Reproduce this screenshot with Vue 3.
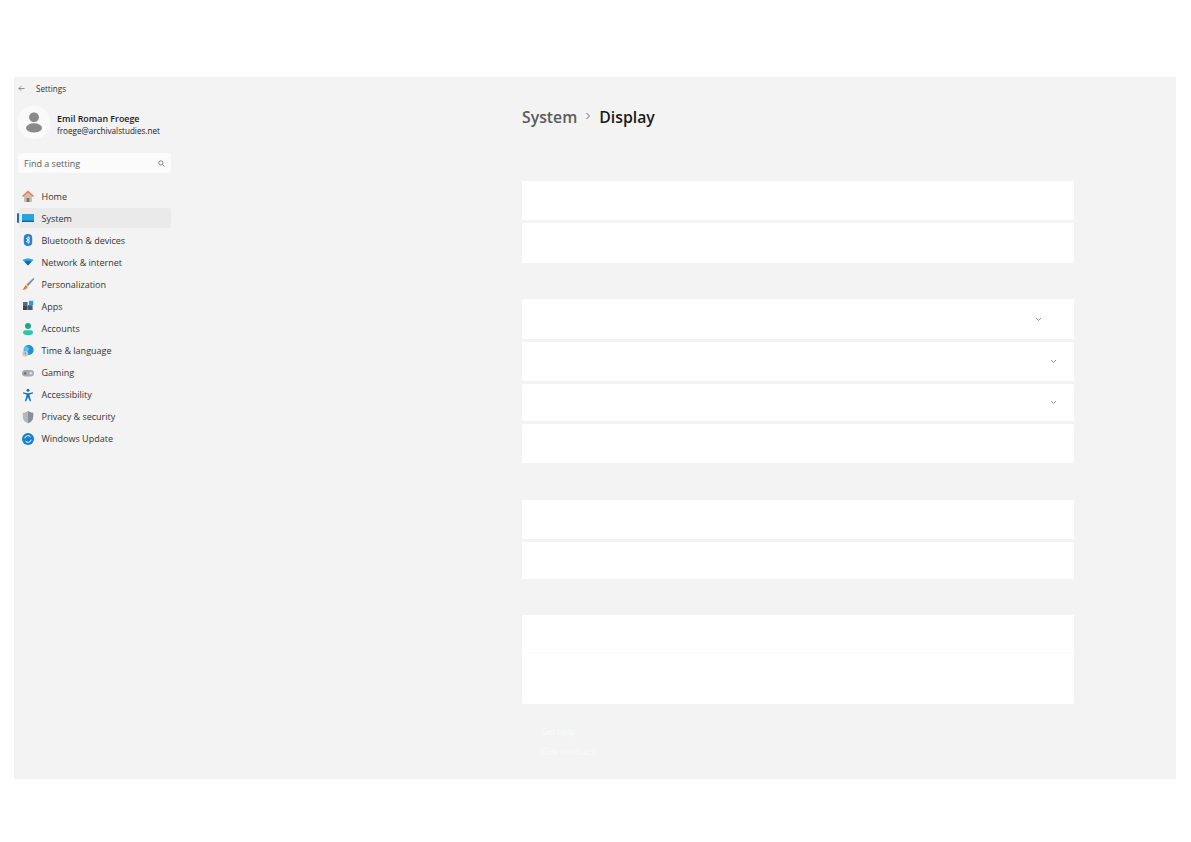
<script setup>
const nav = [
  { key: 'home', label: 'Home' },
  { key: 'system', label: 'System', active: true },
  { key: 'bluetooth', label: 'Bluetooth & devices' },
  { key: 'network', label: 'Network & internet' },
  { key: 'personal', label: 'Personalization' },
  { key: 'apps', label: 'Apps' },
  { key: 'accounts', label: 'Accounts' },
  { key: 'time', label: 'Time & language' },
  { key: 'gaming', label: 'Gaming' },
  { key: 'access', label: 'Accessibility' },
  { key: 'privacy', label: 'Privacy & security' },
  { key: 'update', label: 'Windows Update' }
]
const groups = [
  [{ h: 39 }, { h: 40 }],
  [{ h: 40, chev: 'a' }, { h: 39, chev: 'b' }, { h: 37, chev: 'b' }, { h: 39 }],
  [{ h: 39 }, { h: 37 }]
]
</script>

<template>
  <div class="page">
    <div class="window">
      <aside class="side">
        <div class="titlebar">
          <svg class="back" width="7" height="7" viewBox="0 0 8 8"><path d="M7.500 4H1M3.600 1.400 1 4l2.600 2.600" fill="none" stroke="#777" stroke-width=".9"/></svg>
          <span>Settings</span>
        </div>
        <div class="profile">
          <div class="avatar">
            <svg width="17" height="21" viewBox="0 0 18 22">
              <circle cx="9" cy="5.500" r="5.200" fill="#8a8a8a"/>
              <ellipse cx="9" cy="16.800" rx="8.500" ry="4.900" fill="#8a8a8a"/>
            </svg>
          </div>
          <div class="who">
            <div class="name">Emil Roman Froege</div>
            <div class="mail">froege@archivalstudies.net</div>
          </div>
        </div>
        <div class="search">
          <span>Find a setting</span>
          <svg width="7" height="7" viewBox="0 0 8 8"><circle cx="3.300" cy="3.300" r="2.400" fill="none" stroke="#777" stroke-width="1"/><path d="M5.100 5.100 7.400 7.400" stroke="#777" stroke-width="1"/></svg>
        </div>
        <nav class="nav">
          <div v-for="n in nav" :key="n.key" class="item" :class="{ active: n.active }">
            <svg class="ico" width="14" height="14" viewBox="0 0 14 14">
              <template v-if="n.key === 'home'">
                <path d="M3 6.500 7 3l4 3.500V13H3z" fill="#c4c0ba"/>
                <path d="M5.600 9h2.800v4H5.600z" fill="#9a6a52"/>
                <path d="M1 7 7 1.600 13 7l-1 1-5-4.400L2 8z" fill="#ee7a4c"/>
              </template>
              <template v-else-if="n.key === 'system'">
                <rect x="1" y="3" width="12" height="8" rx=".8" fill="#27a3dc"/>
                <rect x="1" y="9.600" width="12" height="1.400" fill="#12659e"/>
              </template>
              <template v-else-if="n.key === 'bluetooth'">
                <rect x="2.800" y="1" width="8.400" height="12" rx="4" fill="#2a7fd4"/>
                <path d="M5 5l4 3.600-2 1.800V3.600l2 1.800-4 3.600" fill="none" stroke="#fff" stroke-width=".9"/>
              </template>
              <template v-else-if="n.key === 'network'">
                <path d="M1.500 5C4.500 3 9.500 3 12.500 5L7 10.500z" fill="#28a8e8"/>
                <path d="M3.600 6.600C5.600 5.500 8.400 5.500 10.400 6.600L7 10.500z" fill="#0f62b8"/>
              </template>
              <template v-else-if="n.key === 'personal'">
                <path d="M12.400 1 5.400 7.400l1.700 1.700 6.300-7.100z" fill="#8a8a8a"/>
                <path d="M4.900 7.900 6.700 9.700C5.700 12.200 3.400 13 1.400 12.800 3 11.600 3 9.200 4.900 7.900z" fill="#ec7a22"/>
              </template>
              <template v-else-if="n.key === 'apps'">
                <rect x="2" y="6.200" width="4.600" height="4.800" fill="#38465c"/>
                <rect x="7" y="6.200" width="4.600" height="4.800" fill="#4a5a72"/>
                <rect x="2" y="3" width="4.600" height="3" fill="#57677f"/>
                <rect x="8" y="1.800" width="4.200" height="4.200" fill="#2a9ce0"/>
              </template>
              <template v-else-if="n.key === 'accounts'">
                <circle cx="7" cy="4" r="3" fill="#1fa58f"/>
                <path d="M2 10.400C2 8.800 3.400 8.200 4.500 8.200h5c1.100 0 2.500.6 2.500 2.200 0 1.800-2.200 2.800-5 2.800s-5-1-5-2.800z" fill="#2cc4ab"/>
              </template>
              <template v-else-if="n.key === 'time'">
                <circle cx="7.600" cy="6" r="5" fill="#1d93d2"/>
                <path d="M5 2.500c2 0 3.500 1.500 3 3.500S5 7.500 3.500 6 3.500 3 5 2.500z" fill="#5cc6ea"/>
                <circle cx="4.200" cy="9.800" r="3" fill="#c9cbce"/>
                <path d="M4.200 8.300v1.500l1 .7" fill="none" stroke="#555" stroke-width=".6"/>
              </template>
              <template v-else-if="n.key === 'gaming'">
                <rect x="1" y="4" width="12" height="6.400" rx="3.200" fill="#a8adb3"/>
                <circle cx="4.200" cy="7.200" r="1.300" fill="#6c747d"/>
                <circle cx="9.800" cy="7.200" r="1.300" fill="#dfe2e5"/>
              </template>
              <template v-else-if="n.key === 'access'">
                <circle cx="7" cy="2.200" r="1.500" fill="#1478c8"/>
                <path d="M1.800 4.200 7 5.200l5.200-1-.3 1.200-3.400 1 .4 2.600 1.300 4.300H8.900L7 9.200 5.100 13.300H3.800l1.300-4.300.4-2.600-3.400-1z" fill="#1478c8"/>
              </template>
              <template v-else-if="n.key === 'privacy'">
                <path d="M7 1c1.800 1.200 3.400 1.800 5.200 1.800v4C12.200 10 10 12.200 7 13.200 4 12.200 1.800 10 1.800 6.800v-4C3.600 2.800 5.200 2.200 7 1z" fill="#b4b7bb"/>
                <path d="M7 1c1.800 1.200 3.400 1.800 5.200 1.800v4C12.200 10 10 12.200 7 13.200z" fill="#8b9096"/>
              </template>
              <template v-else>
                <circle cx="7" cy="7" r="6" fill="#1680d0"/>
                <path d="M3.800 6.300a3.300 3.300 0 0 1 5.800-1.400M10.200 7.700a3.300 3.300 0 0 1-5.800 1.400" fill="none" stroke="#fff" stroke-width="1"/>
              </template>
            </svg>
            <span>{{ n.label }}</span>
          </div>
        </nav>
      </aside>
      <main class="main">
        <h1 class="crumb">
          <span class="parent">System</span>
          <svg class="sep" width="6" height="8" viewBox="0 0 6 8"><path d="M1.500 1 4.500 4 1.500 7" fill="none" stroke="#555" stroke-width=".9"/></svg>
          <span class="cur">Display</span>
        </h1>
        <div class="groups">
          <section v-for="(g, i) in groups" :key="i" class="group">
            <div v-for="(c, j) in g" :key="j" class="card" :style="{ height: c.h + 'px' }">
              <svg v-if="c.chev" class="chev" :class="c.chev" width="7" height="5" viewBox="0 0 7 5"><path d="M1 1 3.500 3.500 6 1" fill="none" stroke="#888" stroke-width=".9"/></svg>
            </div>
          </section>
          <section class="group joined">
            <div class="card" style="height: 37px"></div>
            <div class="card" style="height: 52px"></div>
          </section>
        </div>
        <div class="links">
          <a>Get help</a>
          <a>Give feedback</a>
        </div>
      </main>
    </div>
  </div>
</template>

<style scoped>
.page {
  width: 1191px;
  height: 842px;
  padding: 77px 15px 63px 14px;
  box-sizing: border-box;
  background: #fff;
  font-family: "Open Sans", "Noto Sans", sans-serif;
}
.window {
  height: 702px;
  background: #f3f3f3;
  display: flex;
  color: #1c1c1c;
}
.side {
  width: 158px;
  padding-left: 5px;
  flex: none;
}
.titlebar {
  display: flex;
  align-items: center;
  height: 22px;
  font-size: 8.100px;
  color: #333;
}
.back { margin-right: 11px; margin-left: -1px; }
.profile {
  display: flex;
  align-items: center;
  margin-top: 7px;
  gap: 7px;
}
.avatar {
  width: 33px;
  height: 33px;
  border-radius: 50%;
  background: #fafafa;
  display: flex;
  align-items: center;
  justify-content: center;
  margin-left: -1px;
  transform: translateX(-.5px);
}
.who { padding-top: 4px; margin-left: -1px; }
.name { font-size: 8.900px; font-weight: 600; line-height: 12px; color: #1a1a1a; }
.mail { font-size: 8.150px; line-height: 12px; color: #222; }
.search {
  margin-top: 14px;
  margin-left: -1px;
  width: 153px;
  height: 20px;
  background: #fbfbfb;
  border-radius: 3px;
  box-sizing: border-box;
  padding: 0 6px;
  display: flex;
  align-items: center;
  justify-content: space-between;
  font-size: 9px;
  color: #5c5c5c;
}
.nav {
  margin-top: 13px;
  display: flex;
  flex-direction: column;
  gap: 2px;
  width: 152px;
}
.item {
  position: relative;
  height: 20.090px;
  display: flex;
  align-items: center;
  padding-left: 2px;
  gap: 6.500px;
  font-size: 9px;
  color: #333;
  border-radius: 3px;
}
.ico { flex: none; }
.active { background: #eaeaea; }
.active::before {
  content: "";
  position: absolute;
  left: -2px;
  top: 5px;
  width: 2px;
  height: 10px;
  background: #1a6fb8;
  border-radius: 1px;
}
.main {
  flex: 1;
  padding-left: 345px;
  min-width: 0;
}
.crumb {
  margin: 28px 0 0;
  height: 24px;
  display: flex;
  align-items: center;
  font-size: 15.800px;
  font-weight: 600;
  line-height: 24px;
}
.parent { color: #5a5a5a; }
.sep { margin: 0 8px 2px 8px; }
.cur { color: #1a1a1a; }
.groups {
  margin-top: 52px;
  width: 552px;
  display: flex;
  flex-direction: column;
  gap: 36.300px;
}
.group {
  display: flex;
  flex-direction: column;
  gap: 3px;
}
.joined { gap: 0; }
.joined .card + .card { border-top: 1px solid #fbfbfb; box-sizing: border-box; }
.card {
  background: #fff;
  border-radius: 1px;
  display: flex;
  align-items: center;
  justify-content: flex-end;
}
.chev.a { margin-right: 32.500px; }
.chev.b { margin-right: 17px; }
.links {
  margin-top: 21.500px;
  margin-left: 19px;
  display: flex;
  flex-direction: column;
  gap: 7px;
  font-size: 8.500px;
  line-height: 13px;
  color: #f9fcfb;
}
</style>
